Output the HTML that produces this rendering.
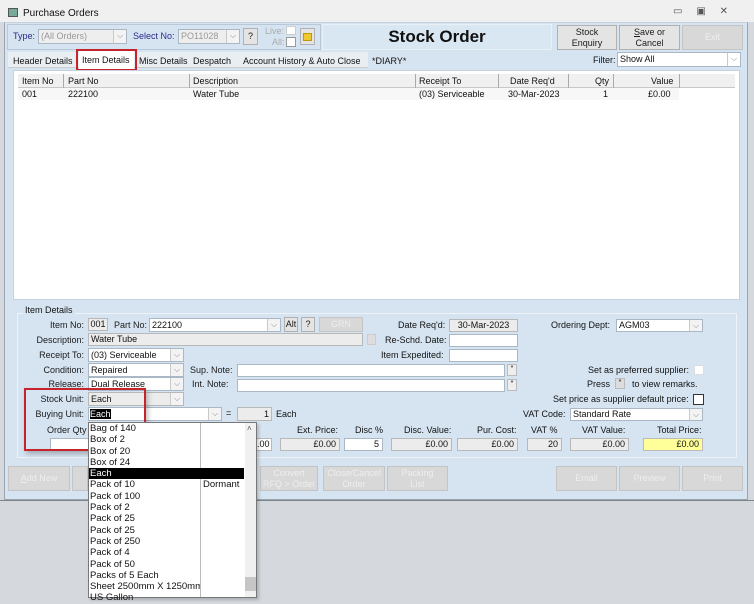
<!DOCTYPE html>
<html><head><meta charset="utf-8"><style>
*{box-sizing:border-box;margin:0;padding:0}
body{width:754px;height:597px;overflow:hidden;position:relative;background:#d5d9de;font-family:"Liberation Sans","DejaVu Sans",sans-serif;font-size:9px;color:#111}
.a{position:absolute;white-space:nowrap}
.box{position:absolute;border:1px solid #aab7c4;background:#fff}
.ro{background:#ececec;border:1px solid #b8b8b8}
.btn{position:absolute;background:#d8d8d8;border:1px solid #c4c4c4;color:#a8a8a8;text-align:center;font-size:9px;line-height:11px;display:flex;align-items:center;justify-content:center}
.btn.on{background:#e4e4e4;color:#1a1a1a;border-color:#b0b0b0}
.dd{position:absolute;top:0;right:0;width:13px;height:100%;border-left:1px solid #c9c9c9;background:#f3f3f3;color:#888;font-size:8px;text-align:center;line-height:12px}
.lbl{position:absolute;white-space:nowrap;text-align:right;color:#1a1a1a}
.r{text-align:right;padding-right:3px}
.t{padding-left:2px;line-height:12px}
</style></head><body>
<div class="a" style="left:0;top:0;width:754px;height:22px;background:#f0f0f0"></div>
<div class="a" style="left:8px;top:8px;width:10px;height:9px;border:1px solid #555;background:#7a9"></div>
<div class="a" style="left:23px;top:8px;font-size:10px">Purchase Orders</div>
<div class="a" style="left:673px;top:6px;color:#555;font-size:10px">▭&nbsp;&nbsp;&nbsp;&nbsp;&nbsp;▣&nbsp;&nbsp;&nbsp;&nbsp;&nbsp;✕</div>
<div class="a" style="left:4px;top:22px;width:744px;height:478px;background:#d6e4f1;border:1px solid #9aa7b3;border-top:1px solid #c6d1dc"></div>
<div class="a" style="left:0;top:500px;width:754px;height:1px;background:#7d858c"></div>
<div class="a" style="left:7px;top:24px;width:314px;height:26px;border:1px solid #b8c8d8"></div>
<div class="a" style="left:13px;top:31px;color:#2a2a8a">Type:</div>
<div class="box" style="left:38px;top:29px;width:89px;height:15px;background:#eee;color:#999"><span class="t">(All Orders)</span><div class="dd">⌵</div></div>
<div class="a" style="left:133px;top:31px;color:#2a2a8a">Select No:</div>
<div class="box" style="left:178px;top:29px;width:62px;height:15px;background:#eee;color:#999"><span class="t">PO11028</span><div class="dd">⌵</div></div>
<div class="btn on" style="left:243px;top:28px;width:15px;height:17px">?</div>
<div class="a" style="left:265px;top:26px;color:#aaa">Live:</div>
<div class="a" style="left:272px;top:37px;color:#aaa">All:</div>
<div class="a" style="left:286px;top:26px;width:10px;height:9px;border:1px solid #ccc;background:#fff"></div>
<div class="a" style="left:286px;top:37px;width:10px;height:10px;border:1px solid #999;background:#fff"></div>
<div class="btn on" style="left:300px;top:28px;width:15px;height:17px"><div style="width:9px;height:8px;background:#f0c830;border:1px solid #b90"></div></div>
<div class="a" style="left:322px;top:24px;width:230px;height:26px;background:#d9e7f3;border:1px solid #e8f0f8"></div>
<div class="a" style="left:322px;top:27px;width:230px;text-align:center;font-size:17px;font-weight:bold">Stock Order</div>
<div class="btn on" style="left:557px;top:25px;width:60px;height:25px">Stock<br>Enquiry</div>
<div class="btn on" style="left:619px;top:25px;width:61px;height:25px"><span><u>S</u>ave or<br>Cancel</span></div>
<div class="btn" style="left:682px;top:25px;width:61px;height:25px;color:#eee">Exit</div>
<div class="a" style="left:8px;top:52px;width:360px;height:16px;background:#e9eef3;border-bottom:1px solid #ccc"></div>
<div class="a" style="left:13px;top:56px">Header Details</div>
<div class="a" style="left:79px;top:51px;width:55px;height:18px;background:#fff"></div>
<div class="a" style="left:82px;top:55px">Item Details</div>
<div class="a" style="left:76px;top:49px;width:61px;height:22px;border:2px solid #c4242a"></div>
<div class="a" style="left:139px;top:56px">Misc Details</div>
<div class="a" style="left:193px;top:56px">Despatch</div>
<div class="a" style="left:243px;top:56px">Account History &amp; Auto Close</div>
<div class="a" style="left:372px;top:56px">*DIARY*</div>
<div class="a" style="left:593px;top:55px">Filter:</div>
<div class="box" style="left:617px;top:52px;width:124px;height:15px"><span class="t">Show All</span><div class="dd" style="background:#fff">⌵</div></div>
<div class="a" style="left:13px;top:70px;width:727px;height:230px;background:#fff;border:1px solid #c5d2de"></div>
<div class="a" style="left:18px;top:74px;width:717px;height:14px;background:#f0f0f0;border-bottom:1px solid #c8c8c8"></div>
<div class="a" style="left:22px;top:76px">Item No</div><div class="a" style="left:63px;top:74px;width:1px;height:14px;background:#aaa"></div>
<div class="a" style="left:68px;top:76px">Part No</div><div class="a" style="left:189px;top:74px;width:1px;height:14px;background:#aaa"></div>
<div class="a" style="left:193px;top:76px">Description</div><div class="a" style="left:415px;top:74px;width:1px;height:14px;background:#aaa"></div>
<div class="a" style="left:419px;top:76px">Receipt To</div><div class="a" style="left:498px;top:74px;width:1px;height:14px;background:#aaa"></div>
<div class="a" style="left:510px;top:76px">Date Req'd</div><div class="a" style="left:568px;top:74px;width:1px;height:14px;background:#aaa"></div>
<div class="a" style="left:595px;top:76px">Qty</div><div class="a" style="left:613px;top:74px;width:1px;height:14px;background:#aaa"></div>
<div class="a" style="left:651px;top:76px">Value</div><div class="a" style="left:679px;top:74px;width:1px;height:14px;background:#aaa"></div>
<div class="a" style="left:18px;top:88px;width:661px;height:12px;background:#f7f7f7"></div>
<div class="a" style="left:22px;top:89px">001</div><div class="a" style="left:68px;top:89px">222100</div><div class="a" style="left:193px;top:89px">Water Tube</div>
<div class="a" style="left:419px;top:89px">(03) Serviceable</div><div class="a" style="left:508px;top:89px">30-Mar-2023</div>
<div class="a" style="left:603px;top:89px">1</div><div class="a" style="left:648px;top:89px">£0.00</div>
<div class="a" style="left:17px;top:313px;width:720px;height:145px;border:1px solid #eef3f8"></div>
<div class="a" style="left:23px;top:305px;background:#d6e4f1;padding:0 2px">Item Details</div>
<div class="lbl" style="right:670px;top:320px">Item No:</div>
<div class="box ro" style="left:88px;top:318px;width:20px;height:13px;text-align:center;line-height:11px">001</div>
<div class="lbl" style="left:114px;top:320px">Part No:</div>
<div class="box" style="left:149px;top:318px;width:132px;height:14px"><span class="t">222100</span><div class="dd">⌵</div></div>
<div class="btn on" style="left:284px;top:317px;width:14px;height:15px">Alt</div>
<div class="btn on" style="left:301px;top:317px;width:14px;height:15px">?</div>
<div class="btn" style="left:319px;top:317px;width:44px;height:15px;color:#eee">GRN</div>
<div class="lbl" style="right:670px;top:335px">Description:</div>
<div class="box ro" style="left:88px;top:333px;width:275px;height:13px"><span class="t" style="line-height:11px">Water Tube</span></div>
<div class="a" style="left:367px;top:334px;width:9px;height:11px;background:#ddd;border:1px solid #ccc"></div>
<div class="lbl" style="right:670px;top:350px">Receipt To:</div>
<div class="box" style="left:88px;top:348px;width:96px;height:14px"><span class="t">(03) Serviceable</span><div class="dd">⌵</div></div>
<div class="lbl" style="right:670px;top:365px">Condition:</div>
<div class="box" style="left:88px;top:363px;width:96px;height:14px"><span class="t">Repaired</span><div class="dd">⌵</div></div>
<div class="lbl" style="right:670px;top:379px">Release:</div>
<div class="box" style="left:88px;top:377px;width:96px;height:14px"><span class="t">Dual Release</span><div class="dd">⌵</div></div>
<div class="lbl" style="left:190px;top:365px">Sup. Note:</div>
<div class="box" style="left:237px;top:364px;width:268px;height:13px"></div>
<div class="lbl" style="left:192px;top:379px">Int. Note:</div>
<div class="box" style="left:237px;top:379px;width:268px;height:13px"></div>
<div class="a" style="left:507px;top:364px;width:10px;height:12px;background:#eee;border:1px solid #bbb;font-size:7px;text-align:center">*</div>
<div class="a" style="left:507px;top:379px;width:10px;height:12px;background:#eee;border:1px solid #bbb;font-size:7px;text-align:center">*</div>
<div class="lbl" style="right:670px;top:394px">Stock Unit:</div>
<div class="box ro" style="left:88px;top:392px;width:96px;height:14px;background:#ececec"><span class="t">Each</span><div class="dd">⌵</div></div>
<div class="lbl" style="right:670px;top:409px">Buying Unit:</div>
<div class="box" style="left:88px;top:407px;width:134px;height:14px"><span style="background:#000;color:#fff;margin-left:1px;line-height:12px">Each</span><div class="dd">⌵</div></div>
<div class="a" style="left:226px;top:408px">=</div>
<div class="box ro" style="left:237px;top:407px;width:35px;height:14px;text-align:right;padding-right:2px;line-height:12px">1</div>
<div class="a" style="left:276px;top:409px">Each</div>
<div class="lbl" style="left:47px;top:425px">Order Qty</div>
<div class="box" style="left:50px;top:438px;width:40px;height:13px"></div>
<div class="a" style="left:398px;top:320px">Date Req'd:</div>
<div class="box ro" style="left:449px;top:319px;width:69px;height:13px;text-align:center;line-height:11px">30-Mar-2023</div>
<div class="a" style="left:385px;top:335px">Re-Schd. Date:</div>
<div class="box" style="left:449px;top:334px;width:69px;height:13px"></div>
<div class="a" style="left:381px;top:350px">Item Expedited:</div>
<div class="box" style="left:449px;top:349px;width:69px;height:13px"></div>
<div class="a" style="left:551px;top:320px">Ordering Dept:</div>
<div class="box" style="left:616px;top:319px;width:87px;height:13px"><span class="t" style="line-height:11px">AGM03</span><div class="dd">⌵</div></div>
<div class="a" style="left:588px;top:365px">Set as preferred supplier:</div>
<div class="a" style="left:694px;top:365px;width:10px;height:10px;background:#fff;border:1px solid #ddd"></div>
<div class="a" style="left:587px;top:379px">Press</div>
<div class="a" style="left:615px;top:378px;width:10px;height:11px;background:#ddd;border:1px solid #bbb;font-size:7px;text-align:center">*</div>
<div class="a" style="left:632px;top:379px">to view remarks.</div>
<div class="a" style="left:553px;top:394px">Set price as supplier default price:</div>
<div class="a" style="left:693px;top:394px;width:11px;height:11px;background:#fff;border:1px solid #333"></div>
<div class="a" style="left:523px;top:409px">VAT Code:</div>
<div class="box" style="left:570px;top:408px;width:133px;height:13px"><span class="t" style="line-height:11px">Standard Rate</span><div class="dd">⌵</div></div>
<div class="a" style="left:297px;top:425px">Ext. Price:</div>
<div class="a" style="left:355px;top:425px">Disc %</div>
<div class="a" style="left:404px;top:425px">Disc. Value:</div>
<div class="a" style="left:477px;top:425px">Pur. Cost:</div>
<div class="a" style="left:531px;top:425px">VAT %</div>
<div class="a" style="left:582px;top:425px">VAT Value:</div>
<div class="a" style="left:657px;top:425px">Total Price:</div>
<div class="box ro r" style="left:256px;top:438px;width:16px;height:13px;line-height:11px;background:#fff">.00</div>
<div class="box ro r" style="left:280px;top:438px;width:60px;height:13px;line-height:11px">£0.00</div>
<div class="box r" style="left:344px;top:438px;width:39px;height:13px;line-height:11px">5</div>
<div class="box ro r" style="left:391px;top:438px;width:61px;height:13px;line-height:11px">£0.00</div>
<div class="box ro r" style="left:457px;top:438px;width:61px;height:13px;line-height:11px">£0.00</div>
<div class="box ro r" style="left:527px;top:438px;width:35px;height:13px;line-height:11px">20</div>
<div class="box ro r" style="left:570px;top:438px;width:59px;height:13px;line-height:11px">£0.00</div>
<div class="box r" style="left:643px;top:438px;width:60px;height:13px;line-height:11px;background:#ffff99;border-color:#bbb">£0.00</div>
<div class="a" style="left:24px;top:388px;width:122px;height:63px;border:2px solid #c4242a;box-shadow:2px 3px 5px rgba(0,0,0,.25)"></div>
<div class="btn" style="left:8px;top:466px;width:62px;height:25px;color:#eee"><u>A</u>dd New</div>
<div class="btn" style="left:72px;top:466px;width:16px;height:25px"></div>
<div class="btn" style="left:260px;top:466px;width:58px;height:25px;color:#eee">Convert<br>RFQ &gt; Order</div>
<div class="btn" style="left:323px;top:466px;width:62px;height:25px;color:#eee">Close/Cancel<br>Order</div>
<div class="btn" style="left:387px;top:466px;width:61px;height:25px;color:#eee">Packing<br>List</div>
<div class="btn" style="left:556px;top:466px;width:61px;height:25px;color:#eee">Email</div>
<div class="btn" style="left:619px;top:466px;width:61px;height:25px;color:#eee">Preview</div>
<div class="btn" style="left:682px;top:466px;width:61px;height:25px;color:#eee">Print</div>
<div class="a" style="left:88px;top:422px;width:169px;height:176px;background:#fff;border:1px solid #777;box-shadow:2px 2px 3px rgba(0,0,0,.2)"></div>
<div class="a" style="left:245px;top:423px;width:11px;height:174px;background:#f0f0f0"></div>
<div class="a" style="left:247px;top:424px;font-size:8px;color:#555">˄</div>
<div class="a" style="left:245px;top:577px;width:11px;height:14px;background:#c6c6c6"></div>
<div class="a" style="left:89px;top:468px;width:155px;height:11px;background:#000"></div>
<div class="a" style="left:90px;top:423px;line-height:11.3px;font-size:9.5px">Bag of 140<br>Box of 2<br>Box of 20<br>Box of 24<br><span style="color:#fff">Each</span><br>Pack of 10<br>Pack of 100<br>Pack of 2<br>Pack of 25<br>Pack of 25<br>Pack of 250<br>Pack of 4<br>Pack of 50<br>Packs of 5 Each<br>Sheet 2500mm X 1250mm<br>US Gallon</div>
<div class="a" style="left:203px;top:479px;line-height:11.3px;font-size:9.5px">Dormant</div>
<div class="a" style="left:200px;top:423px;width:45px;height:45px;background:#fff"></div>
<div class="a" style="left:200px;top:479px;width:45px;height:0"></div>
<div class="a" style="left:200px;top:578px;width:45px;height:19px;background:#fff"></div>
<div class="a" style="left:200px;top:423px;width:1px;height:45px;background:#bbb"></div>
<div class="a" style="left:200px;top:479px;width:1px;height:118px;background:#bbb"></div>
</body></html>
